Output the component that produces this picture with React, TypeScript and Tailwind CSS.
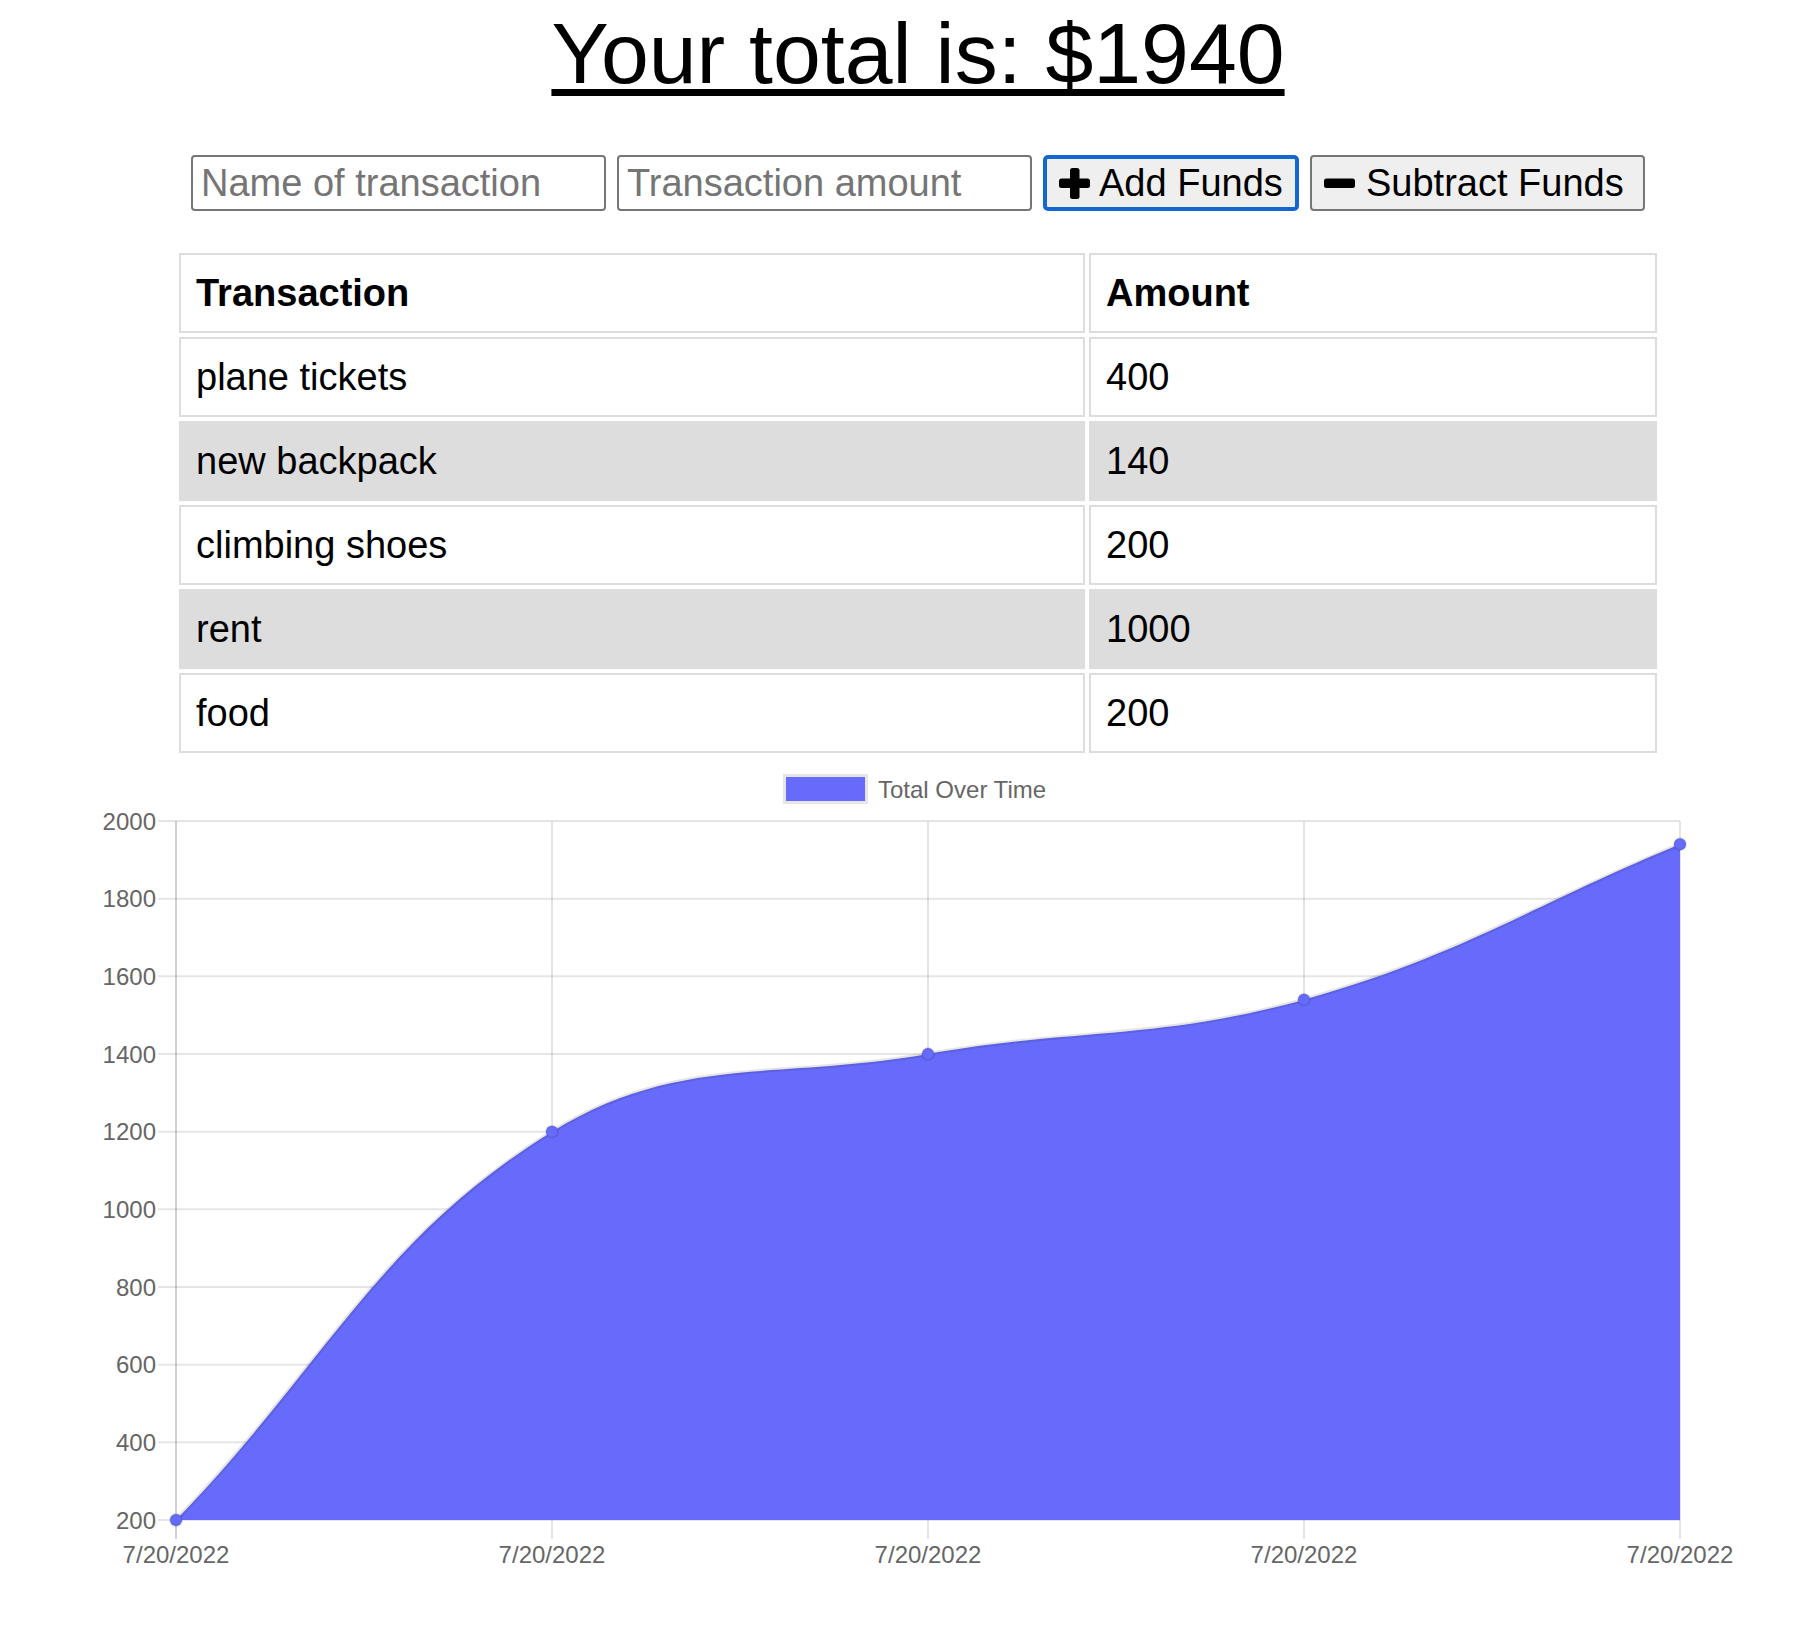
import React from 'react';

const rows = [
  { name: 'plane tickets', amount: 400 },
  { name: 'new backpack', amount: 140 },
  { name: 'climbing shoes', amount: 200 },
  { name: 'rent', amount: 1000 },
  { name: 'food', amount: 200 },
];

// running totals shown in the chart
const totals = [200, 1200, 1400, 1540, 1940];

const X0 = 176;
const STEP = 376;
const BOTTOM = 1520;
const TOP = 821;
const yOf = (v: number) => BOTTOM - ((v - 200) * (BOTTOM - TOP)) / 1800;

const buildPath = () => {
  const pts = totals.map((v, i) => ({ x: X0 + STEP * i, y: yOf(v) }));
  const cps = pts.map((curr, i) => {
    const prev = pts[i - 1] || curr;
    const next = pts[i + 1] || curr;
    const d01 = Math.hypot(curr.x - prev.x, curr.y - prev.y);
    const d12 = Math.hypot(next.x - curr.x, next.y - curr.y);
    const s01 = d01 + d12 ? d01 / (d01 + d12) : 0;
    const s12 = d01 + d12 ? d12 / (d01 + d12) : 0;
    const fa = 0.4 * s01;
    const fb = 0.4 * s12;
    return {
      prev: { x: curr.x - fa * (next.x - prev.x), y: curr.y - fa * (next.y - prev.y) },
      next: { x: curr.x + fb * (next.x - prev.x), y: curr.y + fb * (next.y - prev.y) },
    };
  });
  let d = `M ${pts[0].x} ${pts[0].y}`;
  for (let i = 0; i < pts.length - 1; i++) {
    const a = cps[i].next;
    const b = cps[i + 1].prev;
    d += ` C ${a.x} ${Math.min(a.y, BOTTOM)} ${b.x} ${Math.min(b.y, BOTTOM)} ${pts[i + 1].x} ${pts[i + 1].y}`;
  }
  return { line: d, area: `${d} L ${pts[pts.length - 1].x} ${BOTTOM} L ${pts[0].x} ${BOTTOM} Z`, pts };
};

const PlusIcon = () => (
  <svg width="31" height="31" viewBox="0 0 31 31" className="shrink-0">
    <rect x="11" y="0" width="9.5" height="31" rx="2.5" fill="black" />
    <rect x="0" y="10.5" width="31" height="9.5" rx="2.5" fill="black" />
  </svg>
);

const MinusIcon = () => (
  <svg width="31" height="31" viewBox="0 0 31 31" className="shrink-0">
    <rect x="0" y="10.5" width="31" height="9.5" rx="2.5" fill="black" />
  </svg>
);

const Chart = () => {
  const { line, area, pts } = buildPath();
  const grid = 'rgba(0,0,0,0.1)';
  const font = 'Liberation Sans, Arial, sans-serif';
  return (
    <svg width="1816" height="860" viewBox="0 756 1816 860" className="block">
      {/* legend */}
      <rect x="784.5" y="775.5" width="82" height="27" fill="#676bfb" stroke="#e6e6e6" strokeWidth="3" />
      <text x="878" y="789" fontSize="24" fill="#666" fontFamily={font} dominantBaseline="central">
        Total Over Time
      </text>

      {/* horizontal grid + y ticks */}
      {Array.from({ length: 10 }).map((_, k) => {
        const y = BOTTOM - (k * (BOTTOM - TOP)) / 9;
        return (
          <g key={k}>
            <line x1="158" x2="1680" y1={y} y2={y} stroke={grid} strokeWidth="2" />
            <text x="156" y={y} fontSize="24" fill="#666" fontFamily={font} textAnchor="end" dominantBaseline="central">
              {200 + k * 200}
            </text>
          </g>
        );
      })}

      {/* vertical grid + x ticks */}
      {totals.map((_, i) => {
        const x = X0 + STEP * i;
        return (
          <g key={i}>
            <line x1={x} x2={x} y1={TOP} y2="1539" stroke={i === 0 ? 'rgba(0,0,0,0.18)' : grid} strokeWidth="2" />
            <text x={x} y="1554" fontSize="24" fill="#666" fontFamily={font} textAnchor="middle" dominantBaseline="central">
              7/20/2022
            </text>
          </g>
        );
      })}

      <path d={area} fill="#676bfb" />
      <path d={line} fill="none" stroke="rgba(0,0,0,0.1)" strokeWidth="4" />
      {pts.map((p, i) => (
        <circle key={i} cx={p.x} cy={p.y} r="6" fill="#676bfb" stroke="rgba(0,0,0,0.1)" strokeWidth="2" />
      ))}
    </svg>
  );
};

export default function App() {
  return (
    <div className="w-full bg-white font-['Liberation_Sans',Arial,sans-serif] text-black">
      <div className="pl-[20px]">
        <h1 className="pt-[10px] text-center text-[86px] font-normal leading-none underline decoration-[7px] underline-offset-[6px]">
          Your total is: $1940
        </h1>

        <div className="mt-[59px] flex justify-center gap-[11px]">
          <input
            placeholder="Name of transaction"
            className="h-[56px] w-[415px] rounded-[4px] border-2 border-[#767676] bg-white px-[8px] text-[38px] outline-none placeholder:text-[#757575]"
          />
          <input
            placeholder="Transaction amount"
            className="h-[56px] w-[415px] rounded-[4px] border-2 border-[#767676] bg-white px-[8px] text-[38px] outline-none placeholder:text-[#757575]"
          />
          <button className="flex h-[56px] w-[256px] items-center gap-[9px] rounded-[5px] border-4 border-[#1467d1] bg-[#efefef] pl-[12px] text-[38px]">
            <PlusIcon />
            <span>Add Funds</span>
          </button>
          <button className="flex h-[56px] w-[335px] items-center gap-[11px] rounded-[4px] border-2 border-[#767676] bg-[#efefef] pl-[12px] text-[38px]">
            <MinusIcon />
            <span>Subtract Funds</span>
          </button>
        </div>

        <div className="mx-auto mt-[42px] grid w-[1478px] grid-cols-[906px_568px] gap-[4px] text-[38px]">
          <div className="flex h-[80px] items-center border-2 border-[#dddddd] px-[15px] font-bold">Transaction</div>
          <div className="flex h-[80px] items-center border-2 border-[#dddddd] px-[15px] font-bold">Amount</div>
          {rows.map((r, i) => {
            const shade = i % 2 === 1 ? 'bg-[#dddddd]' : 'bg-white';
            return (
              <React.Fragment key={r.name}>
                <div className={`flex h-[80px] items-center border-2 border-[#dddddd] px-[15px] ${shade}`}>{r.name}</div>
                <div className={`flex h-[80px] items-center border-2 border-[#dddddd] px-[15px] ${shade}`}>{r.amount}</div>
              </React.Fragment>
            );
          })}
        </div>
      </div>

      <div className="mt-[3px]">
        <Chart />
      </div>
    </div>
  );
}
